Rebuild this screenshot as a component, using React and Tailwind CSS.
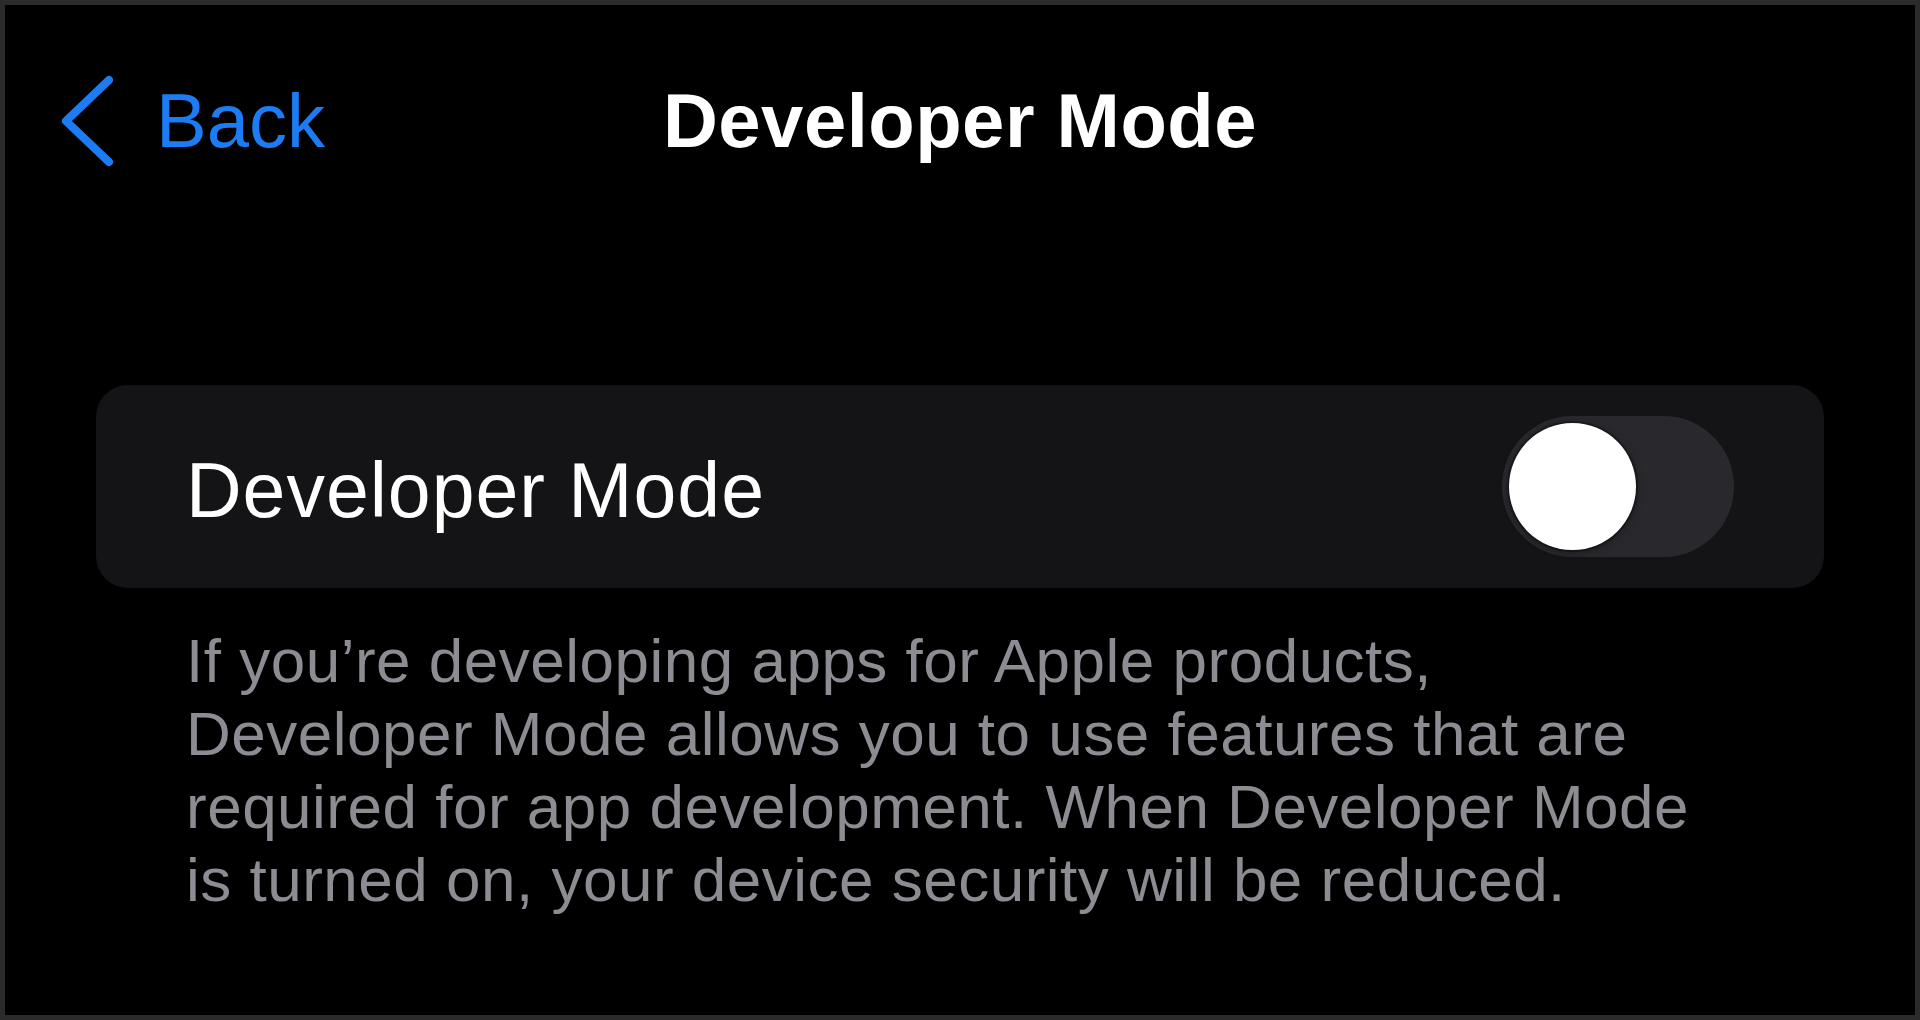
import React, { useState } from "react";

const font = { fontFamily: '"Liberation Sans", Arial, sans-serif' };

function BackChevron() {
  return (
    <svg width="56" height="92" viewBox="0 0 56 92" fill="none">
      <polyline
        points="49,5 6,46 49,87"
        stroke="#1c7cf4"
        strokeWidth="8"
        strokeLinecap="round"
        strokeLinejoin="round"
      />
    </svg>
  );
}

function Toggle({ on, onChange }) {
  return (
    <button
      onClick={() => onChange(!on)}
      className={`flex h-[141px] w-[232px] shrink-0 items-center rounded-full px-[7px] ${
        on ? "justify-end bg-[#30d158]" : "justify-start bg-[#29282d]"
      }`}
    >
      <span className="block h-[127px] w-[127px] rounded-full bg-white shadow-[0_0_0_2px_rgba(10,10,12,0.35),0_2px_8px_rgba(0,0,0,0.45)]" />
    </button>
  );
}

export default function App() {
  const [devMode, setDevMode] = useState(false);

  return (
    <div
      className="box-border h-screen w-full overflow-hidden border-[5px] border-[#2b2b2b] bg-black shadow-[inset_0_0_4px_rgba(0,0,0,0.8)]"
      style={font}
    >
      {/* nav bar */}
      <div className="mt-[70px] grid h-[92px] grid-cols-[1fr_auto_1fr] items-center">
        <div className="flex items-center gap-[40px] pl-[55px] text-[#1c7cf4]">
          <BackChevron />
          <span className="text-[76px] leading-none">Back</span>
        </div>
        <h1 className="text-[76px] font-bold leading-none tracking-[0.5px] text-white">Developer Mode</h1>
        <div />
      </div>

      {/* settings group */}
      <div className="mx-[91px] mt-[218px] flex h-[203px] items-center justify-between rounded-[32px] bg-[#141416] pl-[90px] pr-[90px]">
        <span className="pt-[8px] text-[77px] leading-none tracking-[1px] text-white">Developer Mode</span>
        <Toggle on={devMode} onChange={setDevMode} />
      </div>

      {/* footer note */}
      <p className="mt-[36px] pl-[181px] text-[62px] leading-[73px] tracking-[0.5px] text-[#8c8c92]">
        <span className="block">If you’re developing apps for Apple products,</span>
        <span className="block">Developer Mode allows you to use features that are</span>
        <span className="block">required for app development. When Developer Mode</span>
        <span className="block">is turned on, your device security will be reduced.</span>
      </p>
    </div>
  );
}
